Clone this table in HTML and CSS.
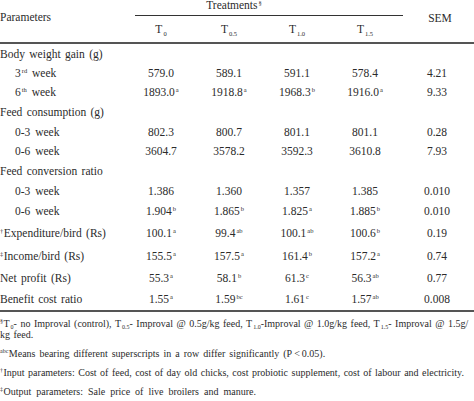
FILE: index.html
```html
<!DOCTYPE html>
<html lang="en">
<head>
<meta charset="utf-8">
<title>Economics of broiler production</title>
<link rel="stylesheet" href="styles.css">
</head>
<body>
<div class="page">
<table class="tbl">
  <colgroup>
    <col class="c-param"><col class="c-t0"><col class="c-t05"><col class="c-t10"><col class="c-t15"><col class="c-sem">
  </colgroup>
  <thead>
    <tr class="hr1">
      <th rowspan="2" class="param-head">Parameters</th>
      <th colspan="4" class="treat"><span class="treat-label">Treatments<sup>§</sup></span><div class="treat-rule"></div></th>
      <th rowspan="2" class="sem-head">SEM</th>
    </tr>
    <tr class="hr2">
      <th>T<sub>0</sub></th>
      <th>T<sub>0.5</sub></th>
      <th>T<sub>1.0</sub></th>
      <th>T<sub>1.5</sub></th>
    </tr>
  </thead>
  <tbody>
    <tr class="h21"><td class="cat" colspan="6">Body weight gain (g)</td></tr>
    <tr class="h18"><td class="sub">3<sup>rd</sup> week</td><td>579.0</td><td>589.1</td><td>591.1</td><td>578.4</td><td>4.21</td></tr>
    <tr class="h20"><td class="sub">6<sup>th</sup> week</td><td>1893.0<sup>a</sup></td><td>1918.8<sup>a</sup></td><td>1968.3<sup>b</sup></td><td>1916.0<sup>a</sup></td><td>9.33</td></tr>
    <tr class="h21"><td class="cat" colspan="6">Feed consumption (g)</td></tr>
    <tr class="h18"><td class="sub">0-3 week</td><td>802.3</td><td>800.7</td><td>801.1</td><td>801.1</td><td>0.28</td></tr>
    <tr class="h20"><td class="sub">0-6 week</td><td>3604.7</td><td>3578.2</td><td>3592.3</td><td>3610.8</td><td>7.93</td></tr>
    <tr class="h20"><td class="cat" colspan="6">Feed conversion ratio</td></tr>
    <tr class="h20"><td class="sub">0-3 week</td><td>1.386</td><td>1.360</td><td>1.357</td><td>1.385</td><td>0.010</td></tr>
    <tr class="h21"><td class="sub">0-6 week</td><td>1.904<sup>b</sup></td><td>1.865<sup>b</sup></td><td>1.825<sup>a</sup></td><td>1.885<sup>b</sup></td><td>0.010</td></tr>
    <tr class="h23"><td class="cat"><sup class="mark">†</sup>Expenditure/bird (Rs)</td><td>100.1<sup>a</sup></td><td>99.4<sup>ab</sup></td><td>100.1<sup>ab</sup></td><td>100.6<sup>b</sup></td><td>0.19</td></tr>
    <tr class="h22"><td class="cat"><sup class="mark">‡</sup>Income/bird (Rs)</td><td>155.5<sup>a</sup></td><td>157.5<sup>a</sup></td><td>161.4<sup>b</sup></td><td>157.2<sup>a</sup></td><td>0.74</td></tr>
    <tr class="h22"><td class="cat">Net profit (Rs)</td><td>55.3<sup>a</sup></td><td>58.1<sup>b</sup></td><td>61.3<sup>c</sup></td><td>56.3<sup>ab</sup></td><td>0.77</td></tr>
    <tr class="h22"><td class="cat">Benefit cost ratio</td><td>1.55<sup>a</sup></td><td>1.59<sup>bc</sup></td><td>1.61<sup>c</sup></td><td>1.57<sup>ab</sup></td><td>0.008</td></tr>
  </tbody>
</table>
<div class="notes">
  <p class="fn fn-first"><sup>§</sup>T<sub>0</sub>- no Improval (control), T<sub>0.5</sub>- Improval @ 0.5g/kg feed, T<sub>1.0</sub>-Improval @ 1.0g/kg feed, T<sub>1.5</sub>- Improval @ 1.5g/<br>kg feed.</p>
  <p class="fn fn-wide"><sup>abc</sup>Means bearing different superscripts in a row differ significantly (P&#8201;&lt;&#8201;0.05).</p>
  <p class="fn"><sup>†</sup>Input parameters: Cost of feed, cost of day old chicks, cost probiotic supplement, cost of labour and electricity.</p>
  <p class="fn fn-wider"><sup>‡</sup>Output parameters: Sale price of live broilers and manure.</p>
</div>
</div>
</body>
</html>
```
FILE: styles.css
```css
html, body {
  margin: 0;
  padding: 0;
  background: #ffffff;
}
body {
  width: 474px;
  height: 401px;
  overflow: hidden;
  font-family: "Liberation Serif", "Times New Roman", serif;
  color: #2b2b2b;
}
.page {
  width: 474px;
}
.tbl {
  width: 474px;
  table-layout: fixed;
  border-collapse: collapse;
  font-size: 11.5px;
}
.c-param { width: 128px; }
.c-t0 { width: 66px; }
.c-t05 { width: 70px; }
.c-t10 { width: 66px; }
.c-t15 { width: 70px; }
.c-sem { width: 74px; }

.tbl th {
  font-weight: normal;
  padding: 0;
  text-align: center;
  line-height: 13px;
}
.tbl thead tr.hr2 th {
  height: 24px;
  vertical-align: middle;
  padding-bottom: 1px;
  border-bottom: 2px solid #555555;
}
.tbl thead tr.hr1 th {
  height: 17px;
}
.param-head {
  text-align: left !important;
  vertical-align: top;
  padding-top: 11px !important;
  border-bottom: 2px solid #555555;
}
.sem-head {
  vertical-align: top;
  padding-top: 12px !important;
  padding-left: 6px !important;
  border-bottom: 2px solid #555555;
}
.treat {
  vertical-align: top;
}
.treat-label {
  display: block;
  height: 15px;
  line-height: 11px;
  padding-right: 60px;
}
.treat-rule {
  margin-left: 7px;
  margin-right: -3px;
  border-top: 1.5px solid #333333;
}
.tbl td {
  padding: 0;
  text-align: center;
  vertical-align: middle;
  line-height: 13px;
  white-space: nowrap;
}
.tbl td.cat {
  text-align: left;
  word-spacing: 1.5px;
}
.tbl td.sub {
  text-align: left;
  padding-left: 15px;
  word-spacing: 2px;
}
.tbl tbody tr:last-child td {
  border-bottom: 2px solid #555555;
}
.h18 { height: 18px; }
.h20 { height: 20px; }
.h21 { height: 21px; }
.h22 { height: 22px; }
.h23 { height: 23px; }

sup {
  font-size: 6.5px;
  line-height: 0;
  vertical-align: 4px;
  margin-left: 1px;
}
sup.mark {
  margin-left: 0;
  margin-right: 0.5px;
}
sub {
  font-size: 6.5px;
  line-height: 0;
  vertical-align: -3px;
  margin-left: 1px;
}
.notes {
  padding-top: 6px;
  font-size: 10px;
}
.fn {
  margin: 0;
  line-height: 11px;
  white-space: nowrap;
  word-spacing: 1px;
}
.fn + .fn {
  margin-top: 8px;
}
.fn-wide {
  word-spacing: 1.5px;
}
.fn-wider {
  word-spacing: 2.5px;
}
.fn sup {
  margin-left: 0;
  margin-right: 0.5px;
  font-size: 6px;
}
.fn sub {
  font-size: 6px;
  vertical-align: -2px;
}
```
